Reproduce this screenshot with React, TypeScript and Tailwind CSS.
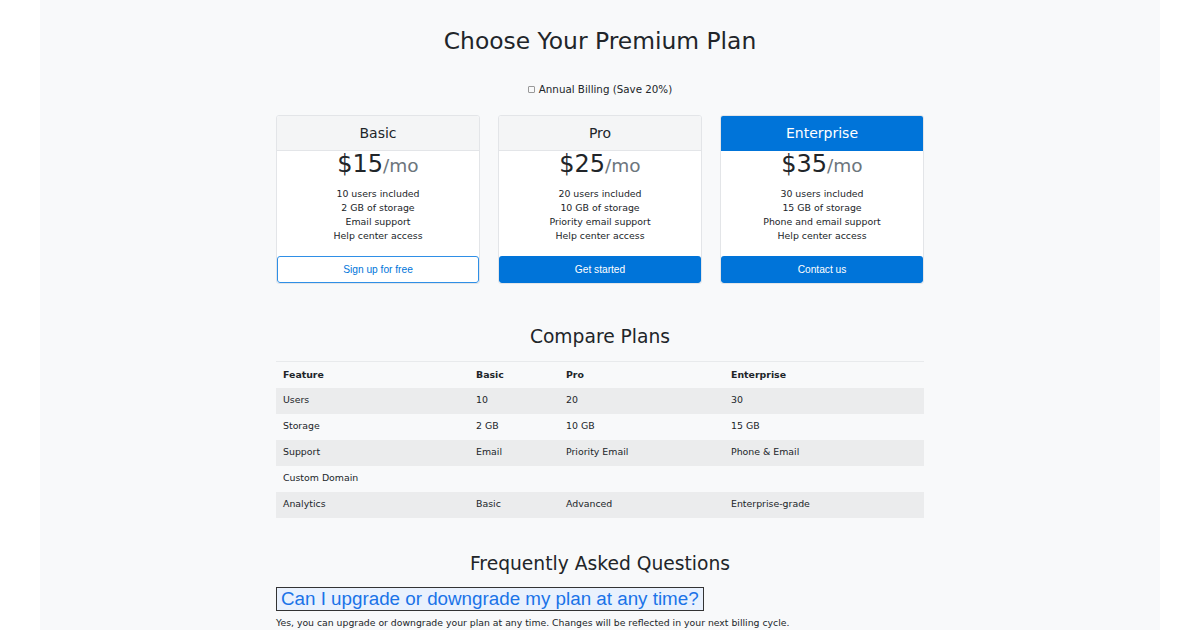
import React from "react";

const plans = [
  {
    name: "Basic",
    price: "$15",
    features: ["10 users included", "2 GB of storage", "Email support", "Help center access"],
    cta: "Sign up for free",
    featured: false,
    outline: true,
  },
  {
    name: "Pro",
    price: "$25",
    features: ["20 users included", "10 GB of storage", "Priority email support", "Help center access"],
    cta: "Get started",
    featured: false,
    outline: false,
  },
  {
    name: "Enterprise",
    price: "$35",
    features: ["30 users included", "15 GB of storage", "Phone and email support", "Help center access"],
    cta: "Contact us",
    featured: true,
    outline: false,
  },
];

const rows = [
  ["Users", "10", "20", "30"],
  ["Storage", "2 GB", "10 GB", "15 GB"],
  ["Support", "Email", "Priority Email", "Phone & Email"],
  ["Custom Domain", "", "", ""],
  ["Analytics", "Basic", "Advanced", "Enterprise-grade"],
];

export default function App() {
  return (
    <div className="min-h-screen bg-white font-['DejaVu_Sans',sans-serif] text-[#212529]">
      <div className="mx-auto w-[1120px] bg-[#f8f9fa] pt-[26px] pb-[20px]">
        <div className="mx-auto w-[648px]">
          <h1 className="text-center text-[23.4px] leading-[30px] font-normal">Choose Your Premium Plan</h1>
          <div className="mt-[26px] flex items-center justify-center gap-[4px] text-[10.3px] leading-[14px]">
            <span className="inline-block h-[7px] w-[7px] rounded-[1px] border border-[#999]"></span>
            <span>Annual Billing (Save 20%)</span>
          </div>
          <div className="mt-[19px] grid grid-cols-3 gap-[18px]">
            {plans.map((p) => (
              <div key={p.name} className="flex flex-col overflow-hidden rounded-[3px] border border-[#e3e5e8] bg-white">
                <div
                  className={
                    p.featured
                      ? "flex h-[35px] items-center justify-center bg-[#0074d9] text-[14px] text-white"
                      : "flex h-[35px] items-center justify-center border-b border-[#e3e5e8] bg-[#f4f5f6] text-[14px]"
                  }
                >
                  {p.name}
                </div>
                <div className="text-center">
                  <div className="mt-[-2px] leading-[30px]">
                    <span className="text-[24px]">{p.price}</span>
                    <span className="text-[18.5px] text-[#6c757d]">/mo</span>
                  </div>
                  <ul className="mt-[5px] text-[9.4px] leading-[14px]">
                    {p.features.map((f) => (
                      <li key={f}>{f}</li>
                    ))}
                  </ul>
                </div>
                <button
                  className={
                    p.outline
                      ? "mt-[13px] h-[27px] w-full rounded-[3px] border border-[#2f8fe6] bg-white font-['Liberation_Sans',sans-serif] text-[10.2px] text-[#0074d9]"
                      : "mt-[13px] h-[27px] w-full rounded-[3px] bg-[#0074d9] font-['Liberation_Sans',sans-serif] text-[10.2px] text-white"
                  }
                >
                  {p.cta}
                </button>
              </div>
            ))}
          </div>

          <h2 className="mt-[40px] text-center text-[18.7px] leading-[26px] font-normal">Compare Plans</h2>
          <table className="mt-[11px] w-full border-collapse text-left text-[9.4px]">
            <thead>
              <tr className="h-[26px] border-t border-[#e8eaec]">
                <th className="w-[193px] pl-[7px] font-bold">Feature</th>
                <th className="w-[90px] pl-[7px] font-bold">Basic</th>
                <th className="w-[165px] pl-[7px] font-bold">Pro</th>
                <th className="pl-[7px] font-bold">Enterprise</th>
              </tr>
            </thead>
            <tbody>
              {rows.map((r, i) => (
                <tr key={r[0]} className={i % 2 === 0 ? "h-[26px] bg-[#ebeced]" : "h-[26px]"}>
                  {r.map((c, j) => (
                    <td key={j} className="pl-[7px]">{c}</td>
                  ))}
                </tr>
              ))}
            </tbody>
          </table>

          <h2 className="mt-[33px] text-center text-[18.7px] leading-[26px] font-normal">Frequently Asked Questions</h2>
          <button className="mt-[10px] block h-[24px] border border-[#333] bg-[#e9f1fd] px-[4px] font-['Liberation_Sans',sans-serif] text-[18.8px] leading-[22px] text-[#1a73e8]">
            Can I upgrade or downgrade my plan at any time?
          </button>
          <p className="mt-[5px] text-[9.3px] leading-[14px]">
            Yes, you can upgrade or downgrade your plan at any time. Changes will be reflected in your next billing cycle.
          </p>
        </div>
      </div>
    </div>
  );
}
